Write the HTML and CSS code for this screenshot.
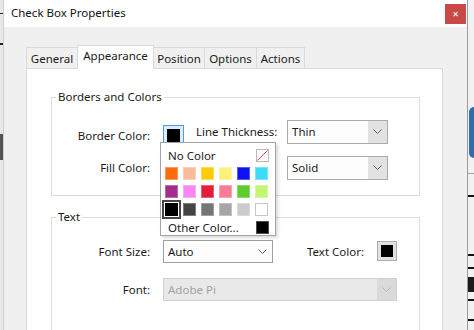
FILE: index.html
```html
<!DOCTYPE html>
<html lang="en">
<head>
<meta charset="UTF-8">
<meta name="viewport" content="width=device-width, initial-scale=1.0">
<title>Check Box Properties</title>
<link rel="stylesheet" href="styles.css">
</head>
<body>
<div class="desk-left">
  <span class="mark mark-top"></span>
  <span class="mark mark-mid"></span>
  <span class="mark mark-block"></span>
</div>

<div class="dialog">
  <div class="title-bar">
    <span class="title">Check Box Properties</span>
    <button class="close-button">&#x2715;</button>
  </div>

  <div class="dialog-body">
    <div class="tabs">
      <div class="tab tab-general">General</div>
      <div class="tab tab-appearance active">Appearance</div>
      <div class="tab tab-position">Position</div>
      <div class="tab tab-options">Options</div>
      <div class="tab tab-actions">Actions</div>
    </div>

    <div class="tab-panel">
      <fieldset class="group group-borders">
        <legend>Borders and Colors</legend>
        <div class="row row-border">
          <span class="field-label nudge">Border Color:</span>
          <span class="swatch focused nudge"><span class="swatch-fill"></span></span>
          <span class="field-label-2">Line Thickness:</span>
          <div class="select select-small">
            <span class="select-value">Thin</span>
            <span class="select-arrow"><svg width="9" height="5" viewBox="0 0 9 5"><polyline points="0.5,0.5 4.5,4.5 8.5,0.5" fill="none" stroke="#606060"/></svg></span>
          </div>
        </div>
        <div class="row row-fill">
          <span class="field-label">Fill Color:</span>
          <span class="swatch"><span class="swatch-fill"></span></span>
          <span class="field-label-2"></span>
          <div class="select select-small">
            <span class="select-value">Solid</span>
            <span class="select-arrow"><svg width="9" height="5" viewBox="0 0 9 5"><polyline points="0.5,0.5 4.5,4.5 8.5,0.5" fill="none" stroke="#606060"/></svg></span>
          </div>
        </div>
      </fieldset>

      <fieldset class="group group-text">
        <legend>Text</legend>
        <div class="row row-size">
          <span class="field-label">Font Size:</span>
          <div class="select select-auto">
            <span class="select-value">Auto</span>
            <span class="select-arrow"><svg width="9" height="5" viewBox="0 0 9 5"><polyline points="0.5,0.5 4.5,4.5 8.5,0.5" fill="none" stroke="#606060"/></svg></span>
          </div>
          <span class="text-color-label">Text Color:</span>
          <span class="swatch"><span class="swatch-fill"></span></span>
        </div>
        <div class="row row-font">
          <span class="field-label">Font:</span>
          <div class="select select-font disabled">
            <span class="select-value">Adobe Pi</span>
            <span class="select-arrow"><svg width="9" height="5" viewBox="0 0 9 5"><polyline points="0.5,0.5 4.5,4.5 8.5,0.5" fill="none" stroke="#b4b4b4"/></svg></span>
          </div>
        </div>
      </fieldset>
    </div>
  </div>
</div>

<div class="desk-right">
  <span class="blue-shape"></span>
  <span class="line line-grey"></span>
  <span class="line line-1"></span>
  <span class="line line-2"></span>
  <span class="line line-3"></span>
  <span class="dark-band"></span>
  <span class="line line-4"></span>
  <span class="line line-5"></span>
</div>

<!-- colour picker dropped open over the Fill Color swatch -->
<div class="color-popup">
  <div class="popup-row">
    <span>No Color</span>
    <svg class="no-color" width="13" height="13" viewBox="0 0 13 13">
      <rect x="0.5" y="0.5" width="12" height="12" fill="#fff" stroke="#b8b8b8"/>
      <line x1="1.5" y1="11.5" x2="11.5" y2="1.5" stroke="#d9475a"/>
    </svg>
  </div>
  <div class="color-grid">
    <span class="chip" style="background:#fb6d0c"></span>
    <span class="chip" style="background:#fbbb9a"></span>
    <span class="chip" style="background:#fdcb08"></span>
    <span class="chip" style="background:#fdf07c"></span>
    <span class="chip" style="background:#0d13f5"></span>
    <span class="chip" style="background:#3cdcf6"></span>
    <span class="chip" style="background:#a12d8c"></span>
    <span class="chip" style="background:#f987ef"></span>
    <span class="chip" style="background:#e11d3a"></span>
    <span class="chip" style="background:#f87b98"></span>
    <span class="chip" style="background:#5dcc2c"></span>
    <span class="chip" style="background:#c3f575"></span>
    <span class="chip selected" style="background:#000"></span>
    <span class="chip" style="background:#444"></span>
    <span class="chip" style="background:#767676"></span>
    <span class="chip" style="background:#a6a6a6"></span>
    <span class="chip" style="background:#cbcbcb"></span>
    <span class="chip chip-white" style="background:#fff"></span>
  </div>
  <div class="popup-row">
    <span>Other Color...</span>
    <span class="chip" style="background:#000"></span>
  </div>
</div>
</body>
</html>
```

FILE: styles.css
```css
body {
  margin: 0;
  height: 330px;
  overflow: hidden;
  display: flex;
  position: relative;
  font-family: "Noto Sans", "Open Sans", sans-serif;
  font-size: 11.5px;
  color: #1a1a1a;
  background-color: #f0f0f0;
}

/* background windows peeking out on both sides */
.desk-left {
  width: 3px;
  position: relative;
  background-color: #e8e8e8;
}

.mark {
  position: absolute;
  left: 0;
  width: 3px;
  background-color: #222;
}

.mark-top { top: 13px; height: 1px; }
.mark-mid { top: 43px; height: 2px; }
.mark-block { top: 134px; height: 26px; background-color: #555; }

.desk-right {
  flex: 1;
  position: relative;
  background-color: #f2f2f2;
}

.blue-shape {
  position: absolute;
  left: 1px;
  top: 107px;
  width: 10px;
  height: 51px;
  border-radius: 5px 0 0 5px;
  background-color: #2f6db3;
}

.line {
  position: absolute;
  left: 0;
  width: 100%;
  height: 2px;
  background-color: #111;
}

.line-grey { top: 173px; height: 1px; background-color: #9aa3ad; }
.line-1 { top: 195px; }
.line-2 { top: 254px; }
.line-3 { top: 267px; }
.line-4 { top: 299px; }
.line-5 { top: 319px; }

.dark-band {
  position: absolute;
  left: 0;
  top: 277px;
  width: 100%;
  height: 15px;
  background-color: #1b1b1b;
}

/* dialog */
.dialog {
  width: 463px;
  border-left: 1px solid #cfcfcf;
  border-right: 1px solid #9a9a9a;
  display: flex;
  flex-direction: column;
}

.title-bar {
  height: 27px;
  flex-shrink: 0;
  display: flex;
  align-items: flex-start;
  background-color: #fff;
  padding-left: 7px;
}

.title {
  margin-top: 5px;
  font-size: 11.5px;
  color: #111;
}

.close-button {
  margin: 4px 1px 0 auto;
  width: 21px;
  height: 20px;
  padding: 0;
  border: none;
  background-color: #c94848;
  color: #fff;
  font-size: 8px;
  font-weight: bold;
  font-family: "DejaVu Sans", sans-serif;
}

.dialog-body {
  flex: 1;
  padding: 18px 0 0 22px;
  background-color: #f0f0f0;
}

.tabs {
  display: flex;
  align-items: flex-end;
  height: 23px;
}

.tab {
  box-sizing: border-box;
  height: 21px;
  padding-top: 2px;
  border: 1px solid #dadada;
  border-bottom: none;
  margin-right: -1px;
  text-align: center;
  line-height: 18px;
  color: #1a1a1a;
  background-color: #f0f0f0;
}

.tab.active {
  height: 24px;
  padding-top: 1px;
  margin-bottom: -1px;
  position: relative;
  z-index: 1;
  background-color: #fff;
}

.tab-general { width: 52px; }
.tab-appearance { width: 77px; }
.tab-position { width: 52px; }
.tab-options { width: 53px; }
.tab-actions { width: 49px; }

.tab-panel {
  box-sizing: border-box;
  width: 417px;
  height: 263px;
  border: 1px solid #d9d9d9;
  background-color: #fff;
  padding: 0 22px 0 24px;
}

.group {
  margin: 20px 0 0;
  padding: 9px 0 9px;
  width: 369px;
  box-sizing: border-box;
  border: 1px solid #dcdcdc;
  min-inline-size: 0;
}

.group legend {
  margin-left: 4px;
  padding: 0 2px;
  line-height: 16px;
}

.group-text {
  margin-top: 13px;
  padding-top: 7px;
  padding-bottom: 0;
  height: 130px;
}

.row {
  display: flex;
  align-items: center;
}

.row-border { height: 35px; }
.row-fill { height: 37px; }
.row-size { height: 38px; }
.row-font { height: 38px; }

.field-label {
  width: 98px;
  margin-right: 13px;
  text-align: right;
}

.nudge {
  margin-top: 7px;
}

.field-label-2 {
  width: 91px;
  margin-left: 12px;
}

.text-color-label {
  width: 70px;
  margin-left: 34px;
}

.swatch {
  box-sizing: border-box;
  width: 21px;
  height: 21px;
  padding: 3px;
  border: 1px solid #adadad;
  background-color: #e1e1e1;
}

.swatch.focused {
  border-color: #4d9be0;
  background-color: #dcecfc;
}

.swatch-fill {
  display: block;
  width: 100%;
  height: 100%;
  background-color: #000;
}

.row-size .swatch {
  width: 20px;
  height: 20px;
}

.select {
  box-sizing: border-box;
  display: flex;
  height: 23px;
  border: 1px solid #acacac;
  background-color: #fdfdfd;
}

.select-value {
  flex: 1;
  padding-left: 4px;
  line-height: 21px;
}

.select-arrow {
  width: 19px;
  display: flex;
  align-items: center;
  justify-content: center;
}

.select-small {
  width: 101px;
  height: 24px;
}

.select-small .select-arrow {
  background-color: #e2e2e2;
}

.select-auto {
  width: 110px;
  border-color: #a0a0a0;
}

.select-font {
  width: 234px;
}

.select.disabled {
  border-color: #d0d0d0;
  background-color: #e9e9e9;
  color: #a2a2a2;
}

.select.disabled .select-arrow {
  background-color: #dadada;
}

/* colour popup */
.color-popup {
  position: absolute;
  left: 160px;
  top: 142px;
  width: 116px;
  height: 94px;
  box-sizing: border-box;
  border: 1px solid #a3a3a3;
  background-color: #fff;
  box-shadow: 2px 2px 3px rgba(0, 0, 0, 0.15);
  padding-top: 5px;
}

.popup-row {
  display: flex;
  justify-content: space-between;
  align-items: center;
  height: 14px;
  padding: 0 6px 0 7px;
}

.color-grid {
  display: grid;
  grid-template-columns: repeat(6, 13px);
  gap: 5px;
  padding: 5px 6px 4px 4px;
}

.chip {
  display: block;
  width: 13px;
  height: 13px;
  box-sizing: border-box;
  box-shadow: inset 0 0 0 1px rgba(255, 255, 255, 0.3);
}

.chip-white {
  border: 1px solid #c6c6c6;
}

.chip.selected {
  box-shadow: 0 0 0 1px #fff, 0 0 0 3px #474747;
}
```
